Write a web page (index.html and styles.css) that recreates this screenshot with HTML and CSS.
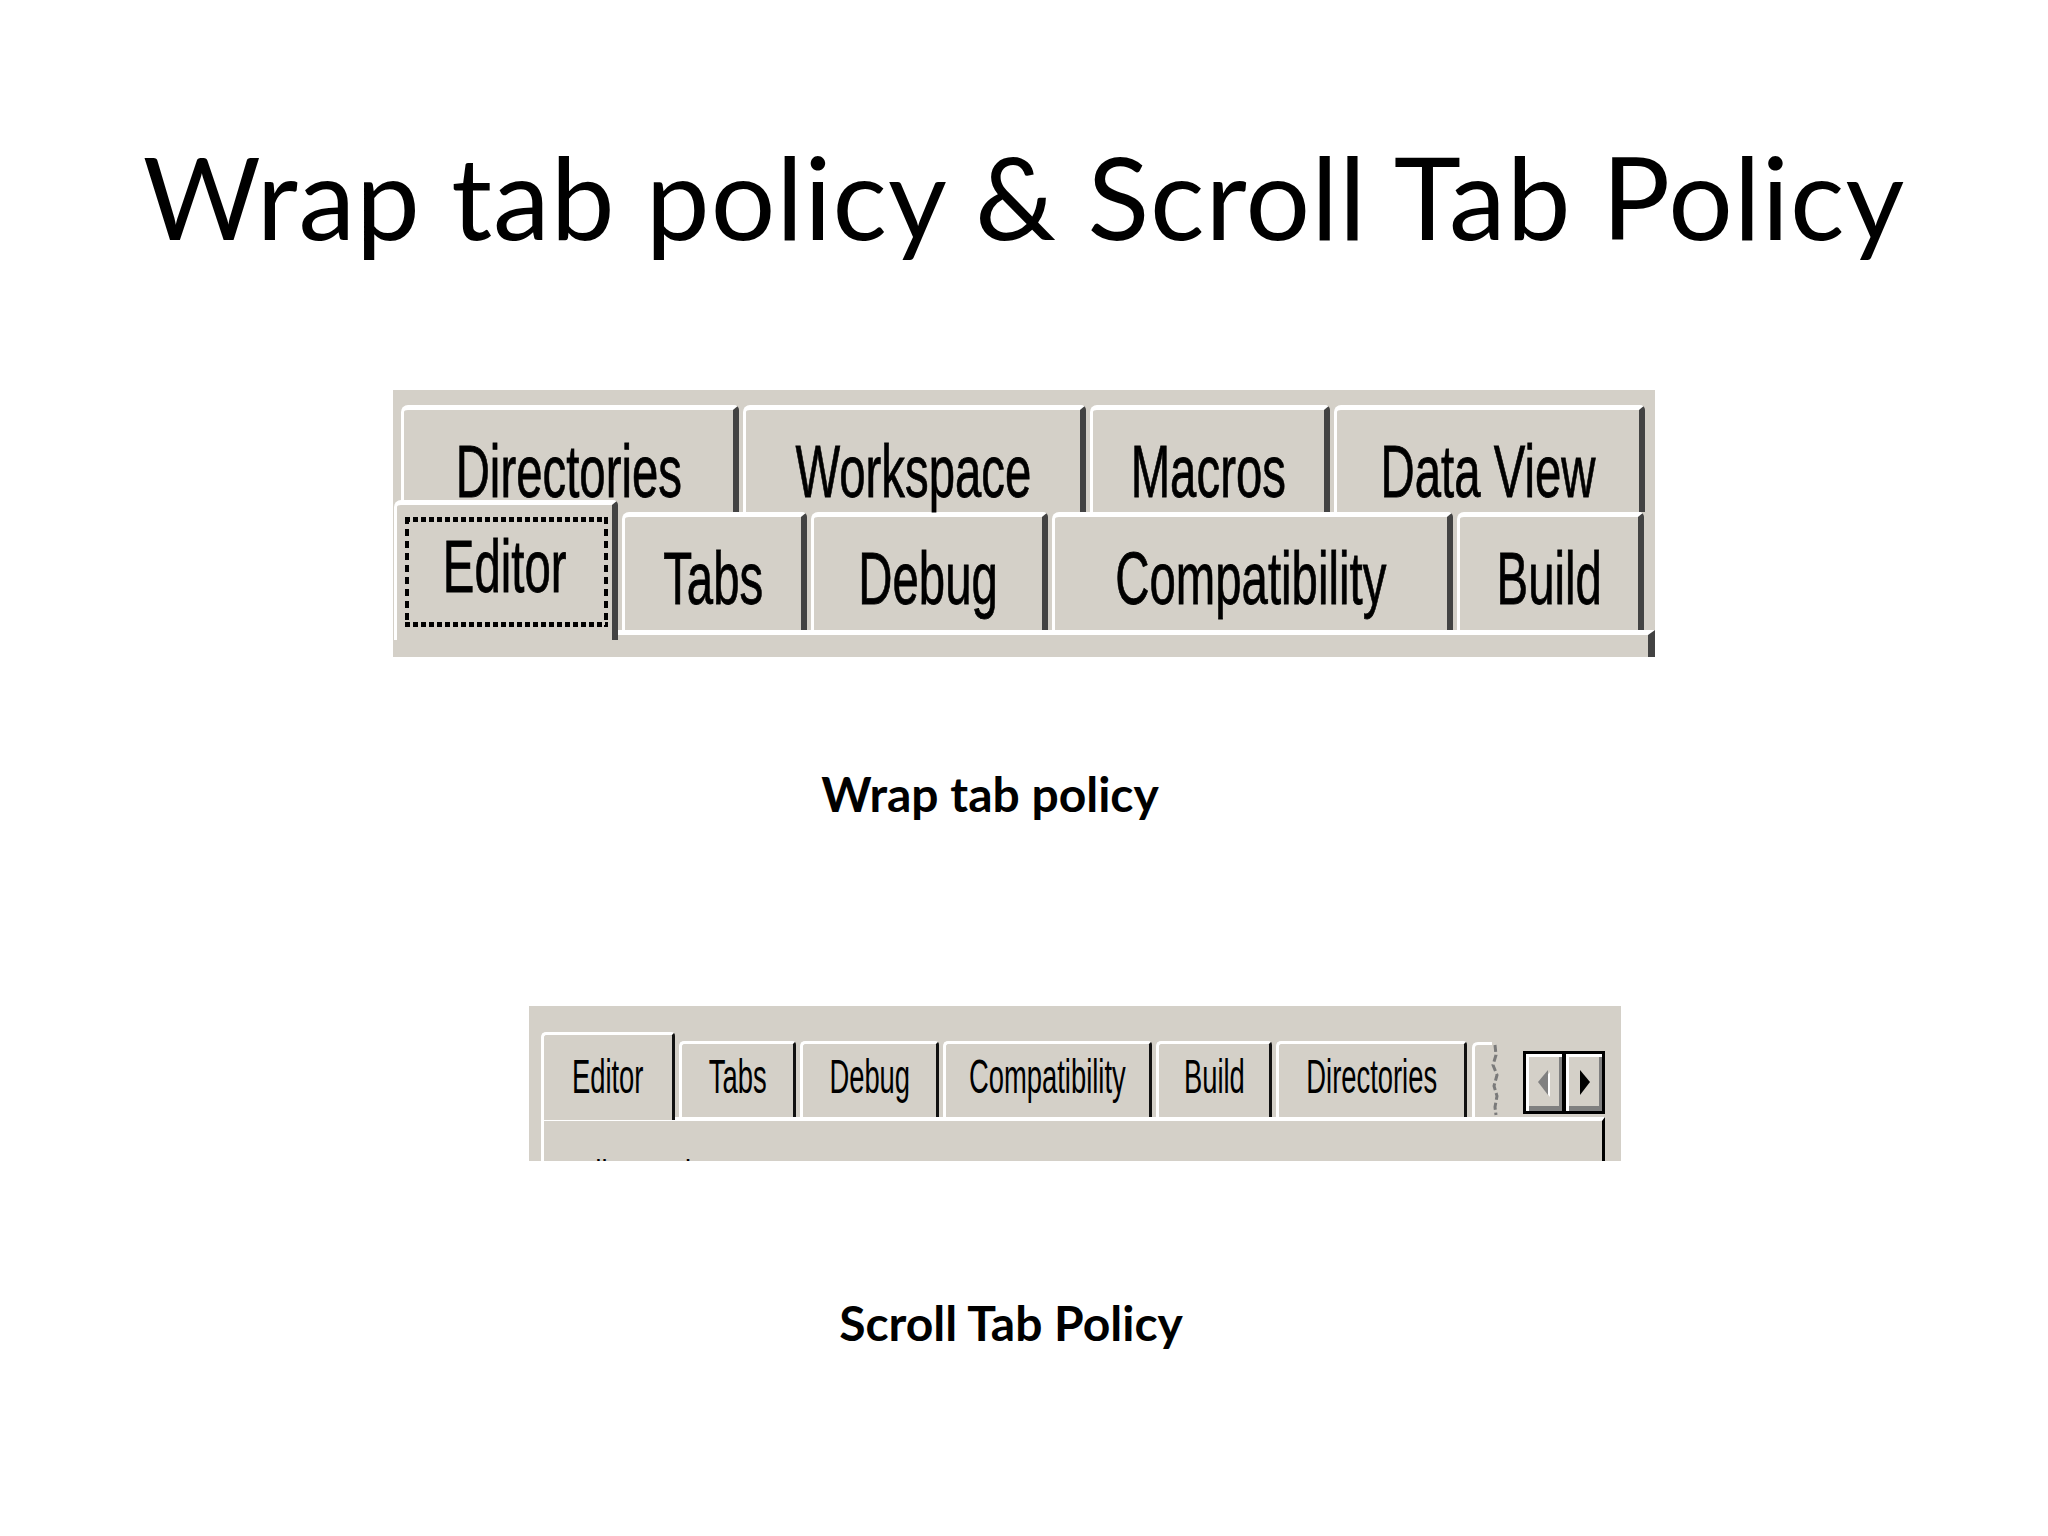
FILE: index.html
```html
<!DOCTYPE html>
<html>
	<head>
		<meta charset="UTF-8">
		<title>Wrap tab policy &amp; Scroll Tab Policy</title>
		<link rel="stylesheet" href="styles.css">
	</head>
	<body>
		<div class="slide">
			<h1 class="title">Wrap tab policy &amp; Scroll Tab Policy</h1>

			<!-- tabs wrapped onto two runs -->
			<div class="wrap-shot">
				<div class="wrow wrow-back">
					<div class="wtab w-dir"><span class="lbl">Directories</span></div>
					<div class="wtab w-work"><span class="lbl">Workspace</span></div>
					<div class="wtab w-macros"><span class="lbl">Macros</span></div>
					<div class="wtab w-data"><span class="lbl">Data View</span></div>
				</div>
				<div class="wrow wrow-front">
					<div class="wtab w-editor selected"><span class="lbl">Editor</span></div>
					<div class="wtab w-tabs"><span class="lbl">Tabs</span></div>
					<div class="wtab w-debug"><span class="lbl">Debug</span></div>
					<div class="wtab w-compat"><span class="lbl">Compatibility</span></div>
					<div class="wtab w-build"><span class="lbl">Build</span></div>
				</div>
				<div class="wpane"></div>
			</div>
			<p class="caption caption-wrap">Wrap tab policy</p>

			<!-- one run of tabs with scroll arrows -->
			<div class="scroll-shot">
				<div class="srow">
					<div class="stab s-editor selected"><span class="lbl">Editor</span></div>
					<div class="stab s-tabs"><span class="lbl">Tabs</span></div>
					<div class="stab s-debug"><span class="lbl">Debug</span></div>
					<div class="stab s-compat"><span class="lbl">Compatibility</span></div>
					<div class="stab s-build"><span class="lbl">Build</span></div>
					<div class="stab s-dir"><span class="lbl">Directories</span></div>
					<svg class="stab-cut" width="30" height="76" viewBox="0 0 30 76">
						<path d="M2.5 76 V7 Q2.5 2.5 7 2.5 H21" fill="none" stroke="#fff" stroke-width="3"/>
						<path d="M24 4 L25 14 L22 24 L26 34 L23 45 L26 55 L24 66 L25 74" fill="none" stroke="#7a7a7a" stroke-width="3" stroke-dasharray="7 3"/>
					</svg>
					<div class="arrows">
						<div class="arrow-btn">
							<svg width="16" height="28" viewBox="0 0 16 28">
								<polygon points="14,3 14,28 4,15" fill="#fff"/>
								<polygon points="12,1 12,26 2,13" fill="#808080"/>
							</svg>
						</div>
						<div class="arrow-btn">
							<svg width="16" height="28" viewBox="0 0 16 28">
								<polygon points="4,1 4,26 14,13" fill="#000"/>
							</svg>
						</div>
					</div>
				</div>
				<div class="spane"><span class="lbl">Editor options</span></div>
			</div>
			<p class="caption caption-scroll">Scroll Tab Policy</p>
		</div>
	</body>
</html>
```

FILE: styles.css
```css
* {margin: 0;padding: 0;box-sizing: border-box;}
body {width: 2048px;height: 1536px;overflow: hidden;background: #fff;color: #000;font-family: Lato, "Noto Sans", sans-serif;}
.slide {display: flex;flex-direction: column;padding-top: 139px;}
.title {font-size: 114px;line-height: 114px;font-weight: normal;letter-spacing: 1px;text-align: center;}
.caption {font-size: 48px;line-height: 48px;font-weight: bold;text-align: center;}
.caption-wrap {margin-top: 113px;padding-right: 68px;}
.caption-scroll {margin-top: 138px;padding-right: 26px;}

.lbl {display: inline-block;white-space: nowrap;font-family: "Liberation Sans", Arial, sans-serif;}

/* wrapped tabs */
.wrap-shot {width: 1262px;height: 267px;margin: 137px 0 0 393px;padding-top: 15px;background: #d4d0c8;overflow: hidden;}
.wrow {display: flex;gap: 4px;}
.wrow-back {height: 107px;padding-left: 8px;}
.wrow-front {height: 130px;margin-top: -12px;padding-left: 1px;align-items: flex-end;}
.wtab {display: flex;justify-content: center;height: 100%;padding-top: 25px;background: #d4d0c8;border-top: 5px solid #fff;border-left: 3px solid #fff;border-right: 6px solid #434343;border-radius: 7px 5px 0 0;font-size: 74px;line-height: 74px;}
.wtab .lbl {transform: scaleX(.64);-webkit-text-stroke: .8px #000;}
.wrow-front .wtab {height: 118px;}
.wrow-front .wtab.selected {position: relative;z-index: 1;height: 140px;margin-bottom: -10px;}
.wtab.selected::after {content: "";position: absolute;left: 8px;top: 12px;width: 203px;height: 110px;
	background:
		repeating-linear-gradient(90deg, #000 0 5px, transparent 5px 8px) top left / 100% 5px no-repeat,
		repeating-linear-gradient(90deg, #000 0 5px, transparent 5px 8px) bottom left / 100% 5px no-repeat,
		repeating-linear-gradient(180deg, #000 0 7px, transparent 7px 12px) top left / 4px 100% no-repeat,
		repeating-linear-gradient(180deg, #000 0 7px, transparent 7px 12px) top right / 4px 100% no-repeat;}
.w-dir {width: 338px;}
.w-work {width: 343px;}
.w-macros {width: 240px;}
.w-data {width: 311px;}
.w-editor {width: 224px;}
.w-tabs {width: 185px;}
.w-debug {width: 237px;}
.w-compat {width: 401px;}
.w-build {width: 187px;}
.wpane {height: 27px;margin-left: 1px;border-top: 5px solid #fff;border-right: 7px solid #434343;}

/* scrolling tabs */
.scroll-shot {width: 1092px;height: 155px;margin: 188px 0 0 529px;padding: 26px 16px 0 12px;background: #d4d0c8;overflow: hidden;}
.srow {display: flex;gap: 4px;height: 85px;align-items: flex-end;}
.stab {display: flex;justify-content: center;height: 76px;padding-top: 9px;background: #d4d0c8;border-top: 3px solid #fff;border-left: 3px solid #fff;border-right: 3px solid #111;border-radius: 5px 4px 0 0;font-size: 48px;line-height: 48px;}
.stab .lbl {transform: scaleX(.57);}
.stab.selected {position: relative;z-index: 1;height: 88px;padding-top: 18px;margin-bottom: -3px;}
.s-editor {width: 134px;}
.s-tabs {width: 117px;}
.s-debug {width: 139px;}
.s-compat {width: 209px;}
.s-build {width: 116px;}
.s-dir {width: 191px;}
.stab-cut {flex: none;}
.arrows {display: flex;margin: 0 0 3px auto;height: 63px;border: 3px solid #000;}
.arrow-btn {display: flex;align-items: center;justify-content: center;width: 36px;box-shadow: inset 3px 3px 0 #fff, inset -3px -5px 0 #808080;}
.arrow-btn + .arrow-btn {width: 40px;border-left: 4px solid #000;}
.spane {height: 44px;padding: 31px 0 0 24px;border-top: 4px solid #fff;border-left: 3px solid #fff;border-right: 3px solid #000;overflow: hidden;font-size: 48px;line-height: 48px;}
.spane .lbl {transform: scaleX(.57);transform-origin: left;}
```
